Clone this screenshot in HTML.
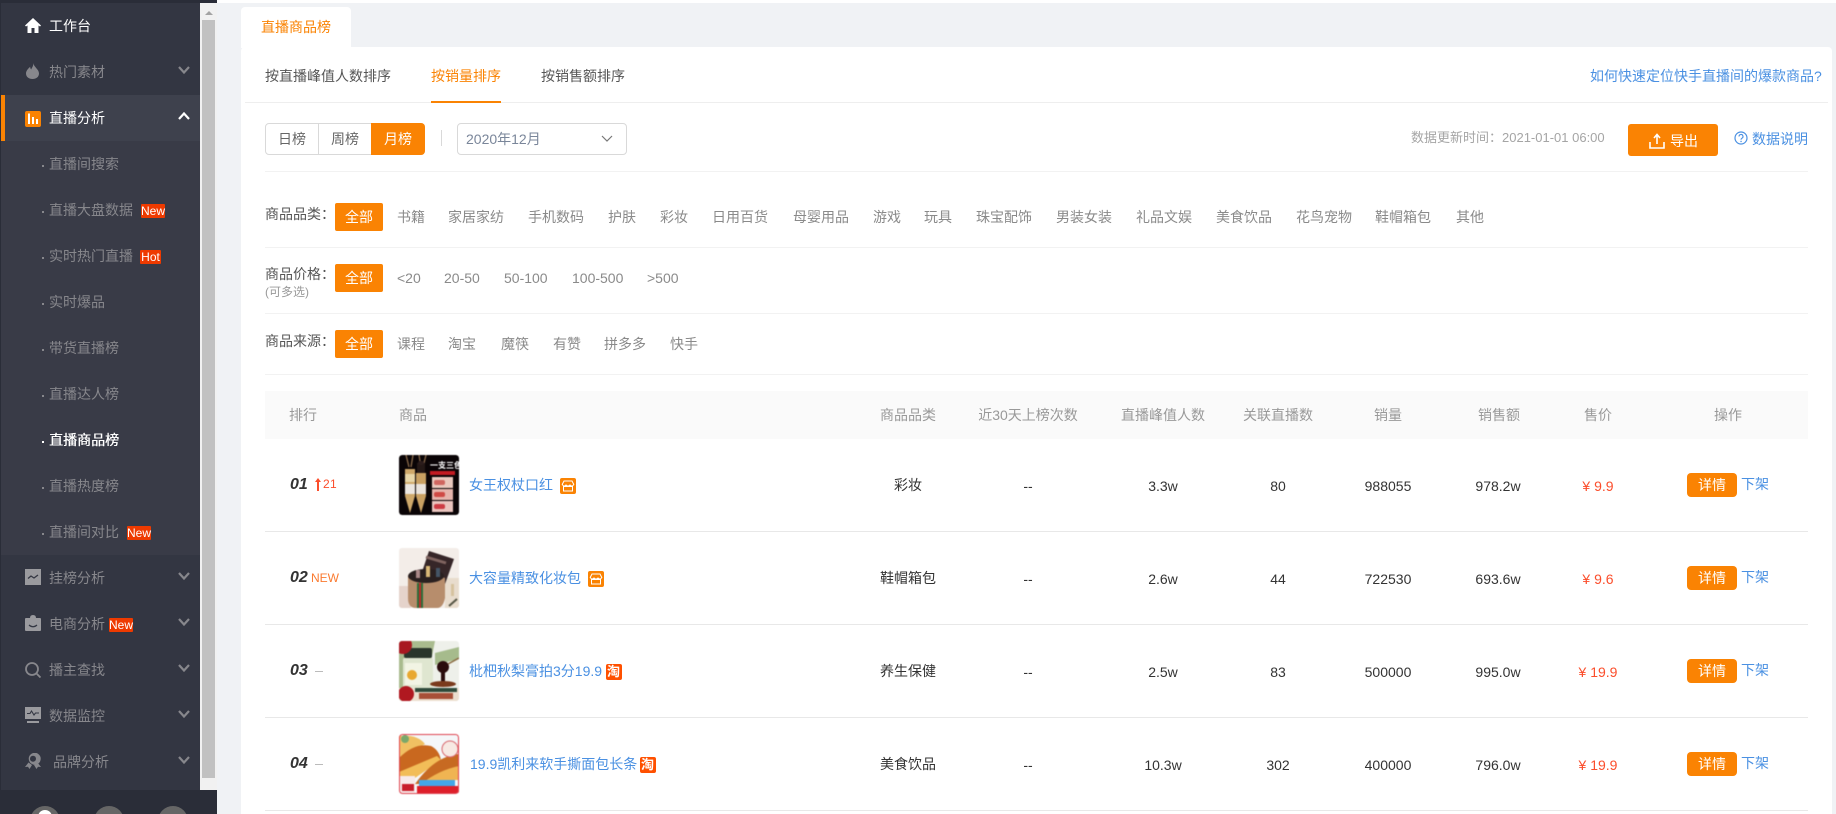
<!DOCTYPE html>
<html lang="zh"><head><meta charset="utf-8"><title>直播商品榜</title>
<style>
*{margin:0;padding:0;box-sizing:border-box}
html,body{width:1836px;height:814px;overflow:hidden;background:#f0f2f5;font-family:"Liberation Sans","Noto Sans CJK SC",sans-serif;font-size:14px}
#root{position:relative;width:1836px;height:814px;overflow:hidden;background:#f0f2f5}
.a{position:absolute}
.t{position:absolute;white-space:nowrap;line-height:20px;height:20px}
.c{transform:translateX(-50%)}
.nav{color:#87878c}
.w{color:#fff}
.dot{position:absolute;left:42px;width:2px;height:2px;background:#87878c}
.bd{position:absolute;height:14px;background:#ee3a00;color:#fff;font-size:12px;line-height:14px;text-align:center;border-radius:1px}
.f{color:#8a8a8a}
.sel{position:absolute;left:335px;width:48px;height:28px;background:#fa8303;border-radius:2px;color:#fff;text-align:center;line-height:28px}
.hr{position:absolute;height:1px;background:#f2f2f2}
.th{color:#999}
.td{color:#333}
.link{color:#4a90e2}
.det{position:absolute;left:1687px;width:50px;height:24px;background:#fa8303;border-radius:4px;color:#fff;text-align:center;line-height:24px}
.rk{position:absolute;left:290px;font-weight:bold;font-style:italic;font-size:16px;line-height:20px;color:#333}
.price{color:#fb4e2c}
svg{position:absolute;display:block}
svg.p{border-radius:3px;filter:blur(.5px)}
</style></head><body><div id="root">

<!-- sidebar -->
<div class="a" style="left:0;top:0;width:217px;height:814px;background:#2a2d38"></div>
<div class="a" style="left:1px;top:3px;width:199px;height:787px;background:#333642"></div>
<div class="a" style="left:1px;top:141px;width:199px;height:414px;background:#393b47"></div>
<div class="a" style="left:1px;top:95px;width:199px;height:46px;background:#3e414d"></div>
<div class="a" style="left:1px;top:95px;width:4px;height:46px;background:#fa8303"></div>
<!-- scrollbar -->
<div class="a" style="left:200px;top:3px;width:17px;height:787px;background:#f1f1f1"></div>
<div class="a" style="left:202px;top:20px;width:13px;height:758px;background:#c1c1c1"></div>
<div class="a" style="left:205px;top:11px;width:0;height:0;border-left:4px solid transparent;border-right:4px solid transparent;border-bottom:4px solid #a3a3a3"></div>

<!-- sidebar icons -->
<svg style="left:25px;top:18px" width="16" height="15" viewBox="0 0 16 15"><path d="M8 0L0 7.500l1 1L2.500 7.500V15h4v-5h3v5h4V7.500L15 8.500l1-1z" fill="#fff"/></svg>
<svg style="left:26px;top:63px" width="13" height="16" viewBox="0 0 13 16"><path d="M7 0c.8 3-1.200 4.500-1.800 6.500C4.400 5.700 4.200 4.800 4.200 3.800 2 5.800 0 8 0 10.500 0 13.800 2.800 16 6.500 16S13 13.800 13 10.500C13 6.500 8.500 4.500 7 0z" fill="#87878c"/></svg>
<div class="a" style="left:25px;top:111px;width:16px;height:16px;background:#fa8303;border-radius:2px"></div>
<svg style="left:25px;top:111px" width="16" height="16" viewBox="0 0 16 16"><path d="M3 2.500h2v10.500H3zM7 6h2v7H7zM11 8h2v5h-2z" fill="#fff"/></svg>
<svg style="left:25px;top:569px" width="16" height="16" viewBox="0 0 16 16"><rect width="16" height="16" fill="#9a9a9e"/><path d="M3 9.500l3-2.500 3 2 4-3" fill="none" stroke="#333642" stroke-width="1.300"/></svg>
<svg style="left:25px;top:615px" width="16" height="16" viewBox="0 0 16 16"><path d="M1 3h14q1 0 1 1v11q0 1-1 1H1q-1 0-1-1V4q0-1 1-1zM5 3q0-3 3-3t3 3z" fill="#9a9a9e"/><path d="M4 10q4 3.500 8 0" fill="none" stroke="#333642" stroke-width="1.200"/></svg>
<svg style="left:25px;top:662px" width="16" height="16" viewBox="0 0 16 16"><circle cx="7" cy="7" r="6" fill="none" stroke="#87878c" stroke-width="1.800"/><path d="M11.500 11.500L15.500 15.500" stroke="#87878c" stroke-width="1.800"/></svg>
<svg style="left:25px;top:707px" width="16" height="16" viewBox="0 0 16 16"><rect width="16" height="12" fill="#9a9a9e"/><path d="M2 6.500h3l1.500-2.500 2.500 4 1.500-2h3.500" fill="none" stroke="#333642" stroke-width="1.100"/><rect x="2" y="14" width="12" height="2" fill="#9a9a9e"/></svg>
<svg style="left:25px;top:753px" width="16" height="16" viewBox="0 0 16 16"><path d="M8 0a6 6 0 1 1 0 11.500A6 6 0 0 1 8 0z" fill="#87878c"/><circle cx="8" cy="5.700" r="3" fill="#333642"/><path d="M3.500 9.500L0 14l3-.3 1.500 2.300 2.500-4zM12.500 9.500L16 14l-3-.3-1.500 2.300-2.500-4z" fill="#87878c"/></svg>

<!-- sidebar text -->
<div class="t w" style="left:49px;top:16px">工作台</div>
<div class="t nav" style="left:49px;top:62px">热门素材</div>
<div class="t w" style="left:49px;top:108px">直播分析</div>
<i class="dot" style="top:165px"></i><div class="t nav" style="left:49px;top:154px">直播间搜索</div>
<i class="dot" style="top:211px"></i><div class="t nav" style="left:49px;top:200px">直播大盘数据</div><div class="bd" style="left:141px;top:204px;width:24px">New</div>
<i class="dot" style="top:257px"></i><div class="t nav" style="left:49px;top:246px">实时热门直播</div><div class="bd" style="left:140px;top:250px;width:21px">Hot</div>
<i class="dot" style="top:303px"></i><div class="t nav" style="left:49px;top:292px">实时爆品</div>
<i class="dot" style="top:349px"></i><div class="t nav" style="left:49px;top:338px">带货直播榜</div>
<i class="dot" style="top:395px"></i><div class="t nav" style="left:49px;top:384px">直播达人榜</div>
<i class="dot" style="top:441px;background:#fff"></i><div class="t w" style="left:49px;top:430px;text-shadow:.4px 0 #fff">直播商品榜</div>
<i class="dot" style="top:487px"></i><div class="t nav" style="left:49px;top:476px">直播热度榜</div>
<i class="dot" style="top:533px"></i><div class="t nav" style="left:49px;top:522px">直播间对比</div><div class="bd" style="left:127px;top:526px;width:24px">New</div>
<div class="t nav" style="left:49px;top:568px">挂榜分析</div>
<div class="t nav" style="left:49px;top:614px">电商分析</div><div class="bd" style="left:109px;top:618px;width:24px">New</div>
<div class="t nav" style="left:49px;top:660px">播主查找</div>
<div class="t nav" style="left:49px;top:706px">数据监控</div>
<div class="t nav" style="left:53px;top:752px">品牌分析</div>

<!-- chevrons -->
<svg style="left:178px;top:66px" width="12" height="8" viewBox="0 0 12 8"><path d="M1 1l5 5.500 5-5.500" fill="none" stroke="#87878c" stroke-width="2.200"/></svg>
<svg style="left:178px;top:112px" width="12" height="8" viewBox="0 0 12 8"><path d="M1 7l5-5.500 5 5.500" fill="none" stroke="#fff" stroke-width="2.200"/></svg>
<svg style="left:178px;top:572px" width="12" height="8" viewBox="0 0 12 8"><path d="M1 1l5 5.500 5-5.500" fill="none" stroke="#87878c" stroke-width="2.200"/></svg>
<svg style="left:178px;top:618px" width="12" height="8" viewBox="0 0 12 8"><path d="M1 1l5 5.500 5-5.500" fill="none" stroke="#87878c" stroke-width="2.200"/></svg>
<svg style="left:178px;top:664px" width="12" height="8" viewBox="0 0 12 8"><path d="M1 1l5 5.500 5-5.500" fill="none" stroke="#87878c" stroke-width="2.200"/></svg>
<svg style="left:178px;top:710px" width="12" height="8" viewBox="0 0 12 8"><path d="M1 1l5 5.500 5-5.500" fill="none" stroke="#87878c" stroke-width="2.200"/></svg>
<svg style="left:178px;top:756px" width="12" height="8" viewBox="0 0 12 8"><path d="M1 1l5 5.500 5-5.500" fill="none" stroke="#87878c" stroke-width="2.200"/></svg>

<!-- bottom circles -->
<div class="a" style="left:30px;top:806px;width:30px;height:30px;border-radius:50%;background:#666"></div>
<div class="a" style="left:38px;top:810px;width:14px;height:14px;border-radius:50%;background:#fff"></div>
<div class="a" style="left:94px;top:806px;width:30px;height:30px;border-radius:50%;background:#666"></div>
<div class="a" style="left:158px;top:806px;width:30px;height:30px;border-radius:50%;background:#666"></div>

<!-- main -->
<div class="a" style="left:217px;top:0;width:1619px;height:3px;background:#fff"></div>
<div class="a" style="left:241px;top:7px;width:110px;height:41px;background:#fff;border-radius:4px 4px 0 0"></div>
<div class="a" style="left:241px;top:47px;width:1591px;height:767px;background:#fff;border-radius:4px 4px 0 0"></div>
<div class="t" style="left:261px;top:17px;color:#fa8303">直播商品榜</div>

<div class="t" style="left:265px;top:66px;color:#555">按直播峰值人数排序</div>
<div class="t" style="left:431px;top:66px;color:#fa8303">按销量排序</div>
<div class="t" style="left:541px;top:66px;color:#555">按销售额排序</div>
<div class="a" style="left:245px;top:102px;width:1583px;height:1px;background:#eee"></div>
<div class="a" style="left:431px;top:101px;width:70px;height:2px;background:#fa8303"></div>
<div class="t link" style="left:1590px;top:66px">如何快速定位快手直播间的爆款商品?</div>

<!-- period -->
<div class="a" style="left:265px;top:123px;width:160px;height:32px;border:1px solid #d9d9d9;border-radius:4px"></div>
<div class="a" style="left:318px;top:123px;width:1px;height:32px;background:#d9d9d9"></div>
<div class="a" style="left:371px;top:123px;width:54px;height:32px;background:#fa8303;border-radius:0 4px 4px 0"></div>
<div class="t c" style="left:292px;top:129px;color:#666">日榜</div>
<div class="t c" style="left:345px;top:129px;color:#666">周榜</div>
<div class="t c" style="left:398px;top:129px;color:#fff">月榜</div>
<div class="a" style="left:441px;top:130px;width:1px;height:16px;background:#d9d9d9"></div>
<div class="a" style="left:457px;top:123px;width:170px;height:32px;border:1px solid #d9d9d9;border-radius:4px"></div>
<div class="t" style="left:466px;top:129px;color:#7a869a">2020年12月</div>
<svg style="left:601px;top:135px" width="12" height="8" viewBox="0 0 12 8"><path d="M1 1l5 5 5-5" fill="none" stroke="#777" stroke-width="1.200"/></svg>

<div class="t" style="left:1411px;top:128px;color:#a5a5a5;font-size:13px">数据更新时间：2021-01-01 06:00</div>
<div class="a" style="left:1628px;top:124px;width:90px;height:32px;background:#fa8303;border-radius:3px"></div>
<svg style="left:1649px;top:133px" width="16" height="16" viewBox="0 0 16 16"><path d="M1 9v6h14V9M8 11V2M5 5l3-3.500L11 5" fill="none" stroke="#fff" stroke-width="1.600"/></svg>
<div class="t" style="left:1670px;top:131px;color:#fff">导出</div>
<svg style="left:1734px;top:131px" width="14" height="14" viewBox="0 0 14 14"><circle cx="7" cy="7" r="6" fill="none" stroke="#4a90e2" stroke-width="1.200"/><path d="M5 5.500a2 2 0 1 1 3 1.700c-.7.400-1 .8-1 1.600" fill="none" stroke="#4a90e2" stroke-width="1.100"/><rect x="6.400" y="9.800" width="1.300" height="1.300" fill="#4a90e2"/></svg>
<div class="t link" style="left:1752px;top:129px">数据说明</div>
<div class="hr" style="left:265px;top:171px;width:1543px"></div>

<!-- filters -->
<div class="t" style="left:265px;top:204px;color:#555;font-size:14px">商品品类：</div>
<div class="sel" style="top:203px">全部</div>
<div class="t f" style="left:397px;top:207px">书籍</div>
<div class="t f" style="left:448px;top:207px">家居家纺</div>
<div class="t f" style="left:528px;top:207px">手机数码</div>
<div class="t f" style="left:608px;top:207px">护肤</div>
<div class="t f" style="left:660px;top:207px">彩妆</div>
<div class="t f" style="left:712px;top:207px">日用百货</div>
<div class="t f" style="left:793px;top:207px">母婴用品</div>
<div class="t f" style="left:873px;top:207px">游戏</div>
<div class="t f" style="left:924px;top:207px">玩具</div>
<div class="t f" style="left:976px;top:207px">珠宝配饰</div>
<div class="t f" style="left:1056px;top:207px">男装女装</div>
<div class="t f" style="left:1136px;top:207px">礼品文娱</div>
<div class="t f" style="left:1216px;top:207px">美食饮品</div>
<div class="t f" style="left:1296px;top:207px">花鸟宠物</div>
<div class="t f" style="left:1375px;top:207px">鞋帽箱包</div>
<div class="t f" style="left:1456px;top:207px">其他</div>
<div class="hr" style="left:265px;top:247px;width:1543px"></div>

<div class="t" style="left:265px;top:264px;color:#555">商品价格：</div>
<div class="t" style="left:265px;top:282px;color:#999;font-size:12px">(可多选)</div>
<div class="sel" style="top:264px">全部</div>
<div class="t f" style="left:397px;top:268px">&lt;20</div>
<div class="t f" style="left:444px;top:268px">20-50</div>
<div class="t f" style="left:504px;top:268px">50-100</div>
<div class="t f" style="left:572px;top:268px">100-500</div>
<div class="t f" style="left:647px;top:268px">&gt;500</div>
<div class="hr" style="left:265px;top:313px;width:1543px"></div>

<div class="t" style="left:265px;top:331px;color:#555">商品来源：</div>
<div class="sel" style="top:330px">全部</div>
<div class="t f" style="left:397px;top:334px">课程</div>
<div class="t f" style="left:448px;top:334px">淘宝</div>
<div class="t f" style="left:501px;top:334px">魔筷</div>
<div class="t f" style="left:553px;top:334px">有赞</div>
<div class="t f" style="left:604px;top:334px">拼多多</div>
<div class="t f" style="left:670px;top:334px">快手</div>
<div class="hr" style="left:265px;top:374px;width:1543px"></div>

<!-- table header -->
<div class="a" style="left:265px;top:391px;width:1543px;height:48px;background:#fafafa"></div>
<div class="t th c" style="left:303px;top:405px">排行</div>
<div class="t th" style="left:399px;top:405px">商品</div>
<div class="t th c" style="left:908px;top:405px">商品品类</div>
<div class="t th c" style="left:1028px;top:405px">近30天上榜次数</div>
<div class="t th c" style="left:1163px;top:405px">直播峰值人数</div>
<div class="t th c" style="left:1278px;top:405px">关联直播数</div>
<div class="t th c" style="left:1388px;top:405px">销量</div>
<div class="t th c" style="left:1499px;top:405px">销售额</div>
<div class="t th c" style="left:1598px;top:405px">售价</div>
<div class="t th c" style="left:1728px;top:405px">操作</div>

<!-- rows lines -->
<div class="a" style="left:265px;top:531px;width:1543px;height:1px;background:#e8e8e8"></div>
<div class="a" style="left:265px;top:624px;width:1543px;height:1px;background:#e8e8e8"></div>
<div class="a" style="left:265px;top:717px;width:1543px;height:1px;background:#e8e8e8"></div>
<div class="a" style="left:265px;top:810px;width:1543px;height:1px;background:#e8e8e8"></div>

<!-- row 1 -->
<div class="rk" style="top:475px">01</div>
<svg style="left:315px;top:478px" width="6" height="13" viewBox="0 0 6 13"><path d="M3 0L0 4h2v9h2V4h2z" fill="#fb4e2c"/></svg>
<div class="t" style="left:323px;top:474px;color:#fb4e2c;font-size:12px;letter-spacing:.3px">21</div>
<svg class="p" style="left:399px;top:455px" width="60" height="60" viewBox="0 0 60 60">
<rect width="60" height="60" rx="3" fill="#0a0406"/>
<path d="M7 0l3 12M14 0l-2 12M20 0l2 12M27 0l-3 12" stroke="#8a6a4a" stroke-width="1.300"/>
<path d="M6 14h10v27l-5 17-5-17z" fill="#cfa86a"/><path d="M17 18h10v23l-5 17-5-17z" fill="#c9a062"/>
<path d="M18 8h8v10h-8z" fill="#241816"/><rect x="19" y="6" width="6" height="4" rx="2" fill="#2b1c1c"/>
<rect x="6" y="19" width="10" height="8" fill="#e8d6a8"/><rect x="6" y="29" width="10" height="10" fill="#ece6e0"/><rect x="17" y="29" width="10" height="10" fill="#eae3dc"/>
<text x="31" y="13" font-size="8" font-weight="bold" fill="#fff" font-family="Noto Sans CJK SC">一支三色</text>
<rect x="31" y="16" width="25" height="4" fill="#c41a22"/>
<rect x="33" y="22" width="21" height="11" fill="#eac8be"/><rect x="35" y="25" width="11" height="5" rx="2" fill="#cf6660"/>
<rect x="33" y="34" width="21" height="11" fill="#e6b4ac"/><rect x="35" y="37" width="11" height="5" rx="2" fill="#cf4a45"/>
<rect x="33" y="46" width="21" height="11" fill="#eac4be"/><rect x="35" y="49" width="11" height="5" rx="2" fill="#cd3c44"/>
</svg>
<div class="t link" style="left:469px;top:475px">女王权杖口红</div>
<svg style="left:560px;top:478px" width="16" height="16" viewBox="0 0 16 16"><rect width="16" height="16" rx="2" fill="#fa8303"/><path d="M4 3h8l1.800 3.500q-.9 1.500-1.900 1.500t-1.900-1q-1 1-2 1t-2-1q-1 1-1.900 1t-1.900-1.500zM3.500 8.500h9v4.500h-9z" fill="none" stroke="#fff" stroke-width="1"/></svg>
<div class="t td c" style="left:908px;top:475px">彩妆</div>
<div class="t td c" style="left:1028px;top:476px">--</div>
<div class="t td c" style="left:1163px;top:476px">3.3w</div>
<div class="t td c" style="left:1278px;top:476px">80</div>
<div class="t td c" style="left:1388px;top:476px">988055</div>
<div class="t td c" style="left:1498px;top:476px">978.2w</div>
<div class="t price c" style="left:1598px;top:476px">¥ 9.9</div>
<div class="det" style="top:473px">详情</div>
<div class="t link" style="left:1741px;top:474px">下架</div>

<!-- row 2 -->
<div class="rk" style="top:568px">02</div>
<div class="t" style="left:311px;top:568px;color:#fa7a30;font-size:12px">NEW</div>
<svg class="p" style="left:399px;top:548px" width="60" height="60" viewBox="0 0 60 60">
<rect width="60" height="60" fill="#f3ede8"/><rect y="38" width="12" height="22" fill="#e5d3cb"/><rect x="46" y="30" width="14" height="30" fill="#e8dccd"/>
<path d="M22 27L30 3l25 8-9 25z" fill="#362628"/><path d="M27 9l20 6" stroke="#7f6460" stroke-width="3"/>
<path d="M9 28q18-6 37 2v20q-2 10-8 10H17q-8 0-8-10z" fill="#b78d6c"/>
<ellipse cx="27" cy="28" rx="18" ry="7" fill="#2a2020"/>
<rect x="17" y="22" width="4" height="8" fill="#a88"/><rect x="27" y="18" width="4" height="11" fill="#d9b877"/><rect x="37" y="20" width="4" height="9" fill="#456"/>
<rect x="18" y="35" width="2" height="25" fill="#2a6f3a"/><rect x="20" y="35" width="2" height="25" fill="#c02a2a"/><rect x="22" y="35" width="2" height="25" fill="#2a6f3a"/>
<rect x="52" y="36" width="3" height="12" fill="#d6c29f"/>
<path d="M50 58l8-7" stroke="#554" stroke-width="2"/>
</svg>
<div class="t link" style="left:469px;top:568px">大容量精致化妆包</div>
<svg style="left:588px;top:571px" width="16" height="16" viewBox="0 0 16 16"><rect width="16" height="16" rx="2" fill="#fa8303"/><path d="M4 3h8l1.800 3.500q-.9 1.500-1.900 1.500t-1.900-1q-1 1-2 1t-2-1q-1 1-1.900 1t-1.900-1.500zM3.500 8.500h9v4.500h-9z" fill="none" stroke="#fff" stroke-width="1"/></svg>
<div class="t td c" style="left:908px;top:568px">鞋帽箱包</div>
<div class="t td c" style="left:1028px;top:569px">--</div>
<div class="t td c" style="left:1163px;top:569px">2.6w</div>
<div class="t td c" style="left:1278px;top:569px">44</div>
<div class="t td c" style="left:1388px;top:569px">722530</div>
<div class="t td c" style="left:1498px;top:569px">693.6w</div>
<div class="t price c" style="left:1598px;top:569px">¥ 9.6</div>
<div class="det" style="top:566px">详情</div>
<div class="t link" style="left:1741px;top:567px">下架</div>

<!-- row 3 -->
<div class="rk" style="top:661px">03</div>
<div class="a" style="left:315px;top:671px;width:8px;height:1px;background:#bbb"></div>
<svg class="p" style="left:399px;top:641px" width="60" height="60" viewBox="0 0 60 60">
<rect width="60" height="60" fill="#eef0ea"/><path d="M0 0h36L24 60H0z" fill="#a9bb8e"/><path d="M36 12L60 6v12L36 24z" fill="#a6bb8c"/>
<rect x="5" y="7" width="28" height="10" rx="2" fill="#2a352b"/><rect x="4" y="17" width="30" height="30" rx="2" fill="#dfe6d0"/>
<rect x="6" y="22" width="17" height="22" fill="#f2f4e4"/><circle cx="13" cy="34" r="5" fill="#e8a830"/>
<circle cx="44" cy="26" r="6" fill="#2a0c0c"/><path d="M49 23L60 17" stroke="#8a6a40" stroke-width="1.500"/><path d="M42 30h4v12h-4z" fill="#2a0c0c"/>
<ellipse cx="44" cy="43" rx="13" ry="3" fill="#7a3a1c"/>
<circle cx="4" cy="4" r="9" fill="#a81820"/>
<rect x="0" y="47" width="60" height="13" fill="#ecdfcf"/><rect x="16" y="47" width="42" height="4" fill="#2e4a3a"/>
<circle cx="7" cy="53" r="8" fill="#b01820"/>
<rect x="20" y="52" width="34" height="6" fill="#a85038"/>
</svg>
<div class="t link" style="left:469px;top:661px">枇杷秋梨膏拍3分19.9</div>
<svg style="left:606px;top:664px" width="16" height="16" viewBox="0 0 16 16"><rect width="16" height="16" rx="2" fill="#ff5000"/></svg>
<div class="t" style="left:607px;top:663px;color:#fff;font-size:13px;line-height:18px;height:18px;font-weight:bold">淘</div>
<div class="t td c" style="left:908px;top:661px">养生保健</div>
<div class="t td c" style="left:1028px;top:662px">--</div>
<div class="t td c" style="left:1163px;top:662px">2.5w</div>
<div class="t td c" style="left:1278px;top:662px">83</div>
<div class="t td c" style="left:1388px;top:662px">500000</div>
<div class="t td c" style="left:1498px;top:662px">995.0w</div>
<div class="t price c" style="left:1598px;top:662px">¥ 19.9</div>
<div class="det" style="top:659px">详情</div>
<div class="t link" style="left:1741px;top:660px">下架</div>

<!-- row 4 -->
<div class="rk" style="top:754px">04</div>
<div class="a" style="left:315px;top:764px;width:8px;height:1px;background:#bbb"></div>
<svg class="p" style="left:399px;top:734px" width="60" height="60" viewBox="0 0 60 60">
<rect width="60" height="60" fill="#f5f7f9"/>
<path d="M0 2Q18 0 26 10L0 24z" fill="#f0c062"/>
<path d="M0 24Q16 8 32 12Q40 16 42 26L14 42 0 48z" fill="#c9681f"/>
<path d="M0 38L38 22 42 26 16 44 0 50z" fill="#f2bd58"/>
<path d="M16 50Q36 22 60 20V42L30 50z" fill="#c76a22"/>
<path d="M22 50Q40 36 60 32V46H24z" fill="#f0b452"/>
<circle cx="51" cy="15" r="8" fill="#f7e9e3" stroke="#d8696f"/>
<circle cx="6" cy="5" r="4" fill="#7aa86a"/>
<rect x="0" y="42" width="16" height="18" fill="#f7eaea"/><rect x="3" y="50" width="12" height="7" fill="#c81d2a"/>
<rect x="20" y="46" width="36" height="6" fill="#44a6e8"/><rect x="18" y="52" width="42" height="7" fill="#de1f2a"/>
<rect x=".5" y=".5" width="59" height="59" rx="3" fill="none" stroke="#e04450"/>
</svg>
<div class="t link" style="left:470px;top:754px">19.9凯利来软手撕面包长条</div>
<svg style="left:640px;top:757px" width="16" height="16" viewBox="0 0 16 16"><rect width="16" height="16" rx="2" fill="#ff5000"/></svg>
<div class="t" style="left:641px;top:756px;color:#fff;font-size:13px;line-height:18px;height:18px;font-weight:bold">淘</div>
<div class="t td c" style="left:908px;top:754px">美食饮品</div>
<div class="t td c" style="left:1028px;top:755px">--</div>
<div class="t td c" style="left:1163px;top:755px">10.3w</div>
<div class="t td c" style="left:1278px;top:755px">302</div>
<div class="t td c" style="left:1388px;top:755px">400000</div>
<div class="t td c" style="left:1498px;top:755px">796.0w</div>
<div class="t price c" style="left:1598px;top:755px">¥ 19.9</div>
<div class="det" style="top:752px">详情</div>
<div class="t link" style="left:1741px;top:753px">下架</div>

</div></body></html>
